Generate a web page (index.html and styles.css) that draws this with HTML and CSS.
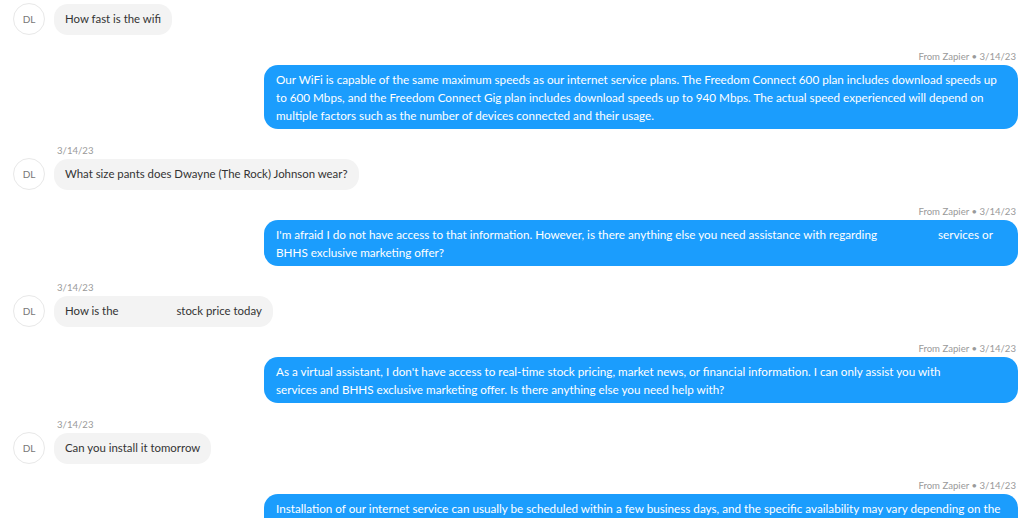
FILE: index.html
```html
<!DOCTYPE html>
<html lang="en">
<head>
  <meta charset="UTF-8">
  <title>Conversation</title>
  <link rel="stylesheet" href="styles.css">
</head>
<body>
  <div class="thread">
    <div class="msg in">
      <div class="row">
        <div class="avatar">DL</div>
        <div class="bubble">How fast is the wifi</div>
      </div>
    </div>

    <div class="msg out">
      <div class="meta">From Zapier &bull; 3/14/23</div>
      <div class="bubble">Our WiFi is capable of the same maximum speeds as our internet service plans. The Freedom Connect 600 plan includes download speeds up to 600 Mbps, and the Freedom Connect Gig plan includes download speeds up to 940 Mbps. The actual speed experienced will depend on multiple factors such as the number of devices connected and their usage.</div>
    </div>

    <div class="msg in">
      <div class="meta">3/14/23</div>
      <div class="row">
        <div class="avatar">DL</div>
        <div class="bubble">What size pants does Dwayne (The Rock) Johnson wear?</div>
      </div>
    </div>

    <div class="msg out">
      <div class="meta">From Zapier &bull; 3/14/23</div>
      <div class="bubble">I'm afraid I do not have access to that information. However, is there anything else you need assistance with regarding <span class="redacted wide"></span> services or BHHS exclusive marketing offer?</div>
    </div>

    <div class="msg in">
      <div class="meta">3/14/23</div>
      <div class="row">
        <div class="avatar">DL</div>
        <div class="bubble">How is the <span class="redacted"></span> stock price today</div>
      </div>
    </div>

    <div class="msg out">
      <div class="meta">From Zapier &bull; 3/14/23</div>
      <div class="bubble">As a virtual assistant, I don't have access to real-time stock pricing, market news, or financial information. I can only assist you with <span class="redacted wide"></span> services and BHHS exclusive marketing offer. Is there anything else you need help with?</div>
    </div>

    <div class="msg in">
      <div class="meta">3/14/23</div>
      <div class="row">
        <div class="avatar">DL</div>
        <div class="bubble">Can you install it tomorrow</div>
      </div>
    </div>

    <div class="msg out">
      <div class="meta">From Zapier &bull; 3/14/23</div>
      <div class="bubble">Installation of our internet service can usually be scheduled within a few business days, and the specific availability may vary depending on the location and the schedule of our technicians. Please contact us to check the earliest available date.</div>
    </div>
  </div>
</body>
</html>
```

FILE: styles.css
```css
* {
  margin: 0;
  padding: 0;
  box-sizing: border-box;
}

body {
  background-color: #fff;
  font-family: 'Lato', 'Open Sans', sans-serif;
  font-size: 11.4px;
  color: #333;
  overflow: hidden;
}

.thread {
  display: flex;
  flex-direction: column;
  gap: 15px;
  padding: 3px 6px 0 13px;
}

.msg {
  display: flex;
  flex-direction: column;
}

.msg.out {
  align-items: flex-end;
}

.meta {
  font-size: 9.6px;
  line-height: 13px;
  color: #9a9a9a;
  margin-bottom: 1px;
}

.msg.in .meta {
  padding-left: 44px;
}

.msg.out .meta {
  margin-right: 2px;
  margin-bottom: 2px;
}

.row {
  display: flex;
  align-items: center;
  gap: 9px;
}

.avatar {
  width: 32px;
  height: 32px;
  border-radius: 50%;
  border: 1px solid #e8e8e8;
  display: flex;
  align-items: center;
  justify-content: center;
  font-size: 10px;
  color: #777;
  flex-shrink: 0;
}

.bubble {
  border-radius: 14px;
  padding: 6.5px 11px;
  line-height: 18px;
}

.msg.in .bubble {
  background-color: #f3f3f3;
}

.msg.out .bubble {
  background-color: #1b9dfd;
  color: #fff;
  font-size: 11.7px;
  max-width: 754px;
  padding: 5px 12px;
}

.redacted {
  display: inline-block;
  width: 52px;
  height: 12px;
  vertical-align: middle;
}

.redacted.wide {
  width: 55px;
}
```
